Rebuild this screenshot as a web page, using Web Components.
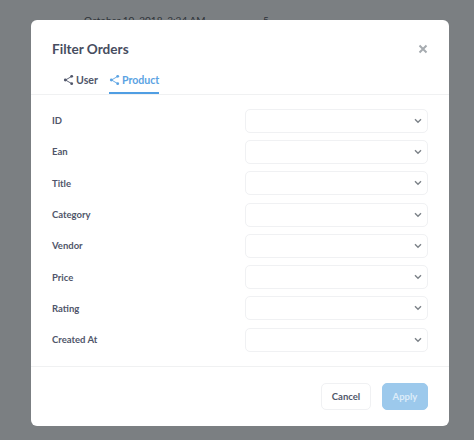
<!DOCTYPE html>
<html>
<head>
<meta charset="utf-8">
<title>Filter Orders</title>
<style>
  html, body { margin: 0; height: 100%; }
  body { background: #7b7f82; font-family: Lato, "Open Sans", sans-serif; overflow: hidden; }
</style>
</head>
<body>
<back-row></back-row>
<filter-dialog title-text="Filter Orders">
  <filter-tab slot="tabs">User</filter-tab>
  <filter-tab slot="tabs" active>Product</filter-tab>
  <filter-row>ID</filter-row>
  <filter-row>Ean</filter-row>
  <filter-row>Title</filter-row>
  <filter-row>Category</filter-row>
  <filter-row>Vendor</filter-row>
  <filter-row>Price</filter-row>
  <filter-row>Rating</filter-row>
  <filter-row>Created At</filter-row>
</filter-dialog>

<script>
class BackRow extends HTMLElement {
    connectedCallback() {
        this.attachShadow({ mode: 'open' });
        this.shadowRoot.innerHTML = `
            <style>
                :host {
                    display: flex;
                    padding: 14px 0 0 84px;
                    font-size: 10px;
                    line-height: 12px;
                    color: #2d3238;
                }
                .date { width: 179px; }
            </style>
            <span class="date">October 10, 2018, 3:24 AM</span>
            <span>5</span>
        `;
    }
}

class FilterDialog extends HTMLElement {
    connectedCallback() {
        this.attachShadow({ mode: 'open' });
        this.shadowRoot.innerHTML = `
            <style>
                :host {
                    display: block;
                    position: absolute;
                    left: 31px;
                    top: 20px;
                    width: 418px;
                    height: 406px;
                    background: #fff;
                    border-radius: 6px;
                    color: #474d60;
                    box-sizing: border-box;
                }
                .head {
                    display: flex;
                    justify-content: space-between;
                    align-items: center;
                    padding: 20px 21px 0 21px;
                    height: 18px;
                }
                h2 {
                    margin: 0;
                    font-size: 13.6px;
                    font-weight: 700;
                    line-height: 18px;
                }
                .close { width: 10px; height: 10px; display: block; }
                .tabs {
                    display: flex;
                    gap: 11px;
                    padding: 12px 0 0 32px;
                    margin-top: 3px;
                    height: 21px;
                    border-bottom: 1px solid #f0f1f2;
                }
                .rows {
                    display: flex;
                    flex-direction: column;
                    padding: 10px 21px 0 21px;
                    height: 261px;
                    border-bottom: 1px solid #f0f1f2;
                }
                .foot {
                    display: flex;
                    justify-content: flex-end;
                    gap: 11px;
                    padding: 16px 21px 0 0;
                }
                button {
                    font: 700 9.5px Lato, sans-serif;
                    height: 27px;
                    border-radius: 5px;
                    box-sizing: border-box;
                    padding: 0;
                }
                .cancel {
                    width: 50px;
                    background: #fff;
                    border: 1px solid #f0f1f3;
                    color: #50566a;
                }
                .apply {
                    width: 46px;
                    background: #9cc9ec;
                    border: 1px solid #9cc9ec;
                    color: #dcecf9;
                }
            </style>
            <div class="head">
                <h2>${this.getAttribute('title-text')}</h2>
                <svg class="close" viewBox="0 0 10 10">
                    <path d="M1.5 1.5l7 7M8.5 1.5l-7 7" stroke="#a6abb0" stroke-width="2" fill="none"/>
                </svg>
            </div>
            <div class="tabs"><slot name="tabs"></slot></div>
            <div class="rows"><slot></slot></div>
            <div class="foot">
                <button class="cancel">Cancel</button>
                <button class="apply">Apply</button>
            </div>
        `;
    }
}

class FilterTab extends HTMLElement {
    connectedCallback() {
        this.attachShadow({ mode: 'open' });
        this.shadowRoot.innerHTML = `
            <style>
                :host {
                    display: flex;
                    align-items: flex-start;
                    gap: 2px;
                    height: 21px;
                    font-size: 10.6px;
                    font-weight: 700;
                    line-height: 14px;
                    color: #50566a;
                }
                :host([active]) {
                    color: #5ba3e3;
                    height: 19px;
                    border-bottom: 2px solid #509ee3;
                }
                svg { width: 11px; height: 12px; margin-top: 1px; flex: none; }
            </style>
            <svg viewBox="0 0 11 12" fill="currentColor">
                <path d="M8.5 2.5L2.5 6l6 3.5" stroke="currentColor" stroke-width="0.9" fill="none"/>
                <circle cx="8.7" cy="2.3" r="1.4"/>
                <circle cx="2.3" cy="6" r="1.4"/>
                <circle cx="8.7" cy="9.7" r="1.4"/>
            </svg>
            <span><slot></slot></span>
        `;
    }
}

class FilterRow extends HTMLElement {
    connectedCallback() {
        this.attachShadow({ mode: 'open' });
        this.shadowRoot.innerHTML = `
            <style>
                :host {
                    display: flex;
                    align-items: center;
                    justify-content: space-between;
                    height: 31.3px;
                    font-size: 9.5px;
                    font-weight: 700;
                    color: #50566a;
                }
                .select {
                    width: 183px;
                    height: 24px;
                    box-sizing: border-box;
                    border: 1px solid #f0f1f3;
                    border-radius: 5px;
                    display: flex;
                    align-items: center;
                    justify-content: flex-end;
                    padding-right: 5px;
                }
                svg { width: 8px; height: 6px; }
            </style>
            <span><slot></slot></span>
            <div class="select">
                <svg viewBox="0 0 8 6">
                    <path d="M1 1.2l3 3 3-3" stroke="#7c8288" stroke-width="1.4" fill="none"/>
                </svg>
            </div>
        `;
    }
}

customElements.define('back-row', BackRow);
customElements.define('filter-dialog', FilterDialog);
customElements.define('filter-tab', FilterTab);
customElements.define('filter-row', FilterRow);
</script>
</body>
</html>
